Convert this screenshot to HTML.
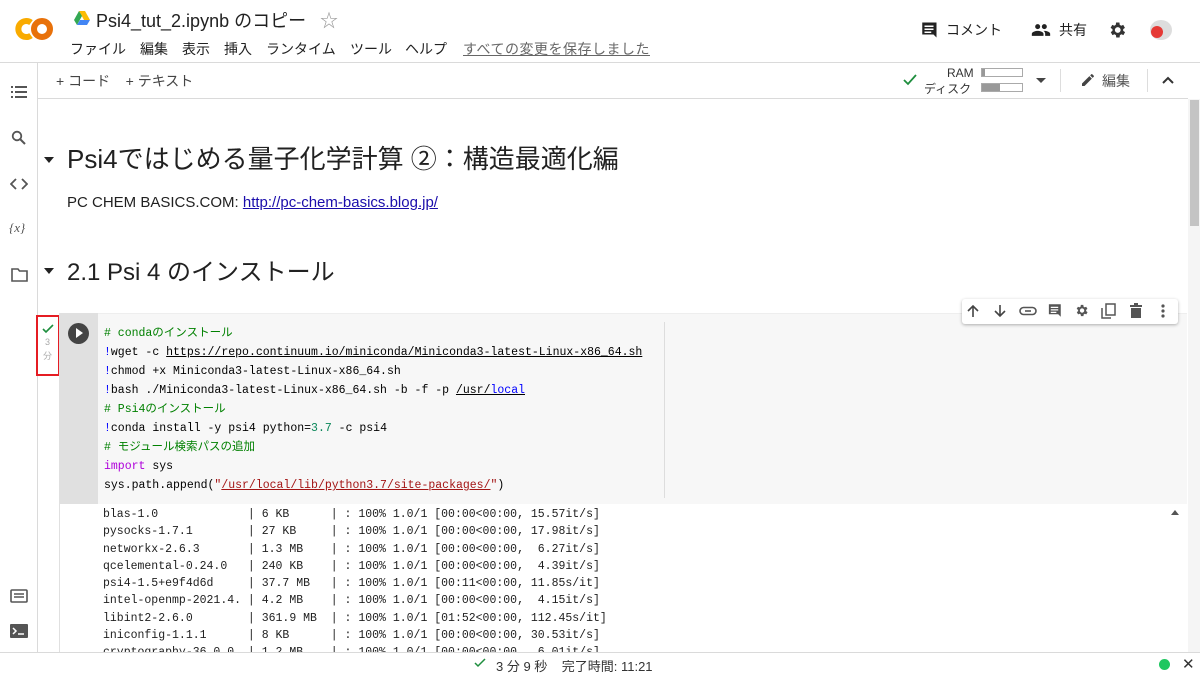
<!DOCTYPE html><html><head><meta charset="utf-8"><style>
*{margin:0;padding:0;box-sizing:border-box}
body{width:1200px;height:677px;overflow:hidden;background:#fff;font-family:"Liberation Sans","Noto Sans CJK JP",sans-serif;color:#212121;position:relative}
.a{position:absolute}
.mono{font-family:"Liberation Mono","Noto Sans CJK JP",monospace;font-size:11.5px;white-space:pre}
.m{position:absolute;top:39px;font-size:14px;color:#212121}
</style></head><body>
<!-- header -->
<svg class="a" style="left:13px;top:17px" width="42" height="24" viewBox="0 0 42 24"><path d="M18 5.5A8 8 0 1 0 18 18.5" fill="none" stroke="#f9ab00" stroke-width="6"/><circle cx="29" cy="12" r="8" fill="none" stroke="#e8710a" stroke-width="6"/></svg>
<svg class="a" style="left:74px;top:11px" width="16" height="14" viewBox="0 0 16 14"><path d="M5 0h6l5 9h-6z" fill="#fbbc04"/><path d="M5 0L0 9l3 5 5-9z" fill="#34a853"/><path d="M3 14h10l3-5H6z" fill="#4285f4"/></svg>
<div class="a" style="left:96px;top:7px;font-size:18px;color:#212121">Psi4_tut_2.ipynb のコピー</div>
<div class="a" style="left:320px;top:7px;font-size:18px;color:#999">☆</div>
<div class="m" style="left:70px">ファイル</div>
<div class="m" style="left:140px">編集</div>
<div class="m" style="left:182px">表示</div>
<div class="m" style="left:224px">挿入</div>
<div class="m" style="left:266px">ランタイム</div>
<div class="m" style="left:350px">ツール</div>
<div class="m" style="left:405px">ヘルプ</div>
<div class="m" style="left:463px;color:#666;text-decoration:underline;letter-spacing:0.5px">すべての変更を保存しました</div>
<svg class="a" style="left:920px;top:21px" width="18" height="18" viewBox="0 0 24 24"><path d="M21 2H3v16h15l4 4V2zM6 6h12v2H6zm0 4h12v2H6zm0 4h9v2H6z" fill="#222"/></svg>
<div class="a" style="left:946px;top:20px;font-size:14px">コメント</div>
<svg class="a" style="left:1030px;top:20px" width="22" height="20" viewBox="0 0 24 24"><path d="M16 11a3 3 0 100-6 3 3 0 000 6zm-8 0a3 3 0 100-6 3 3 0 000 6zm0 2c-2.3 0-7 1.2-7 3.5V19h14v-2.5C15 14.2 10.3 13 8 13zm8 0c-.3 0-.6 0-1 .1 1.2.8 2 2 2 3.4V19h6v-2.5c0-2.3-4.7-3.5-7-3.5z" fill="#222"/></svg>
<div class="a" style="left:1059px;top:20px;font-size:14px">共有</div>
<svg class="a" style="left:1107px;top:20px" width="20" height="20" viewBox="0 0 24 24"><path d="M19.4 13a7 7 0 000-2l2.1-1.6-2-3.5-2.5 1a7 7 0 00-1.7-1L14.9 3h-4l-.4 2.9a7 7 0 00-1.7 1l-2.5-1-2 3.5L6.6 11a7 7 0 000 2l-2.1 1.6 2 3.5 2.5-1a7 7 0 001.7 1l.4 2.9h4l.4-2.9a7 7 0 001.7-1l2.5 1 2-3.5zM12.9 15.5a3.5 3.5 0 110-7 3.5 3.5 0 010 7z" fill="#333"/></svg>
<div class="a" style="left:1150px;top:20px;width:22px;height:20px;border-radius:50%;background:#ddd"></div>
<div class="a" style="left:1151px;top:26px;width:12px;height:12px;border-radius:50%;background:#e53935"></div>
<div class="a" style="left:0;top:62px;width:1200px;height:1px;background:#dadada"></div>
<!-- sidebar -->
<div class="a" style="left:37px;top:63px;width:1px;height:589px;background:#dadada"></div>
<svg class="a" style="left:10px;top:84px" width="18" height="16" viewBox="0 0 18 16"><path d="M1 2h2v2H1zm4 0h12v2H5zM1 7h2v2H1zm4 0h12v2H5zM1 12h2v2H1zm4 0h12v2H5z" fill="#555"/></svg>
<svg class="a" style="left:11px;top:130px" width="16" height="16" viewBox="0 0 16 16"><circle cx="6" cy="6" r="4.3" fill="none" stroke="#555" stroke-width="1.8"/><path d="M9 9l5 5" stroke="#555" stroke-width="2"/></svg>
<svg class="a" style="left:10px;top:177px" width="18" height="14" viewBox="0 0 18 14"><path d="M6 2L1 7l5 5M12 2l5 5-5 5" fill="none" stroke="#555" stroke-width="1.8"/></svg>
<div class="a" style="left:9px;top:220px;font:italic 13px 'Liberation Serif';color:#555">{<i>x</i>}</div>
<svg class="a" style="left:11px;top:268px" width="17" height="14" viewBox="0 0 17 14"><path d="M1 1h6l1.5 2H16v10H1z" fill="none" stroke="#555" stroke-width="1.6"/></svg>
<svg class="a" style="left:10px;top:589px" width="18" height="14" viewBox="0 0 18 14"><rect x="1" y="1" width="16" height="12" rx="1" fill="none" stroke="#555" stroke-width="1.6"/><path d="M4 5h10M4 8h10" stroke="#555" stroke-width="1.4"/></svg>
<svg class="a" style="left:10px;top:624px" width="18" height="14" viewBox="0 0 18 14"><rect width="18" height="14" rx="1" fill="#555"/><path d="M3 4l3 3-3 3" fill="none" stroke="#fff" stroke-width="1.5"/><path d="M8 10h6" stroke="#fff" stroke-width="1.5"/></svg>
<!-- toolbar -->
<div class="a" style="left:56px;top:71px;font-size:14px;color:#444">+ コード&nbsp;&nbsp;&nbsp;&nbsp;+ テキスト</div>
<svg class="a" style="left:903px;top:74px" width="14" height="12" viewBox="0 0 14 12"><path d="M1 6l4 4 8-9" fill="none" stroke="#1e8e3e" stroke-width="1.8"/></svg>
<div class="a" style="left:947px;top:66px;font-size:12px;color:#333">RAM</div>
<div class="a" style="left:924px;top:80px;font-size:12px;color:#333">ディスク</div>
<div class="a" style="left:981px;top:68px;width:42px;height:9px;border:1px solid #aaa"><div style="width:3px;height:7px;background:#999"></div></div>
<div class="a" style="left:981px;top:83px;width:42px;height:9px;border:1px solid #aaa"><div style="width:18px;height:7px;background:#999"></div></div>
<div class="a" style="left:1036px;top:78px;border:5px solid transparent;border-top-color:#444"></div>
<div class="a" style="left:1060px;top:69px;width:1px;height:23px;background:#ddd"></div>
<svg class="a" style="left:1080px;top:72px" width="16" height="16" viewBox="0 0 24 24"><path d="M3 17.2V21h3.8L17.8 9.9l-3.7-3.7zM20.7 7a1 1 0 000-1.4l-2.3-2.3a1 1 0 00-1.4 0l-1.8 1.8 3.7 3.7z" fill="#444"/></svg>
<div class="a" style="left:1102px;top:71px;font-size:14px;color:#555">編集</div>
<div class="a" style="left:1147px;top:69px;width:1px;height:23px;background:#ddd"></div>
<svg class="a" style="left:1162px;top:76px" width="12" height="8" viewBox="0 0 12 8"><path d="M1 7l5-5 5 5" fill="none" stroke="#333" stroke-width="2"/></svg>
<div class="a" style="left:38px;top:98px;width:1150px;height:1px;background:#dadada"></div>
<!-- scrollbar -->
<div class="a" style="left:1188px;top:99px;width:12px;height:553px;background:#f5f5f5"></div>
<div class="a" style="left:1190px;top:100px;width:9px;height:126px;background:#c4c4c4"></div>
<!-- headings -->
<div class="a" style="left:44px;top:157px;border:5px solid transparent;border-top:6px solid #222"></div>
<div class="a" style="left:67px;top:139px;font-size:26px;color:#212121">Psi4ではじめる量子化学計算 ②：構造最適化編</div>
<div class="a" style="left:67px;top:194px;font-size:15px">PC CHEM BASICS.COM: <span style="color:#1a0dab;text-decoration:underline">http://pc-chem-basics.blog.jp/</span></div>
<div class="a" style="left:44px;top:268px;border:5px solid transparent;border-top:6px solid #222"></div>
<div class="a" style="left:67px;top:252px;font-size:24px">2.1 Psi 4 のインストール</div>
<!-- cell -->
<div class="a" style="left:36px;top:315px;width:24px;height:61px;border:2px solid #e51c23"></div>
<svg class="a" style="left:42px;top:324px" width="12" height="10" viewBox="0 0 12 10"><path d="M1 5l3 3 7-7" fill="none" stroke="#1e8e3e" stroke-width="1.6"/></svg>
<div class="a" style="left:45px;top:337px;font-size:9px;color:#aaa">3</div>
<div class="a" style="left:43px;top:349px;font-size:9px;color:#aaa">分</div>
<div class="a" style="left:59px;top:313px;width:1128px;height:191px;background:#f7f7f7;border-top:1px solid #eee"></div>
<div class="a" style="left:59px;top:313px;width:39px;height:191px;background:#e0e0e0"></div>
<div class="a" style="left:68px;top:323px;width:21px;height:21px;border-radius:50%;background:#444"></div>
<div class="a" style="left:76px;top:328px;border:5px solid transparent;border-left:7px solid #fff;border-right:0"></div>
<div class="a" style="left:664px;top:322px;width:1px;height:176px;background:#ddd"></div>
<div class="a mono" style="left:104px;top:324px;line-height:19px;color:#000"><span style="color:#008000"># condaのインストール</span>
<span style="color:#00f">!</span>wget -c <u>https://repo.continuum.io/miniconda/Miniconda3-latest-Linux-x86_64.sh</u>
<span style="color:#00f">!</span>chmod +x Miniconda3-latest-Linux-x86_64.sh
<span style="color:#00f">!</span>bash ./Miniconda3-latest-Linux-x86_64.sh -b -f -p <u>/usr/<span style="color:#00f">local</span></u>
<span style="color:#008000"># Psi4のインストール</span>
<span style="color:#00f">!</span>conda install -y psi4 python=<span style="color:#098658">3.7</span> -c psi4
<span style="color:#008000"># モジュール検索パスの追加</span>
<span style="color:#af00db">import</span> sys
sys.path.append(<span style="color:#a31515">"<u>/usr/local/lib/python3.7/site-packages/</u>"</span>)</div>
<!-- cell toolbar (on top) -->
<div class="a" style="left:962px;top:299px;width:216px;height:25px;background:#fff;border-radius:3px;box-shadow:0 1px 3px rgba(0,0,0,.3)"></div>
<svg class="a" style="left:966px;top:304px" width="14" height="14" viewBox="0 0 14 14"><path d="M7 13V2M2 7l5-5 5 5" fill="none" stroke="#444" stroke-width="1.6"/></svg>
<svg class="a" style="left:993px;top:304px" width="14" height="14" viewBox="0 0 14 14"><path d="M7 1v11M2 7l5 5 5-5" fill="none" stroke="#444" stroke-width="1.6"/></svg>
<svg class="a" style="left:1019px;top:306px" width="18" height="10" viewBox="0 0 18 10"><rect x="1" y="1.5" width="16" height="7" rx="3.5" fill="none" stroke="#555" stroke-width="1.6"/><path d="M6 5h6" stroke="#555" stroke-width="1.6"/></svg>
<svg class="a" style="left:1047px;top:303px" width="15" height="15" viewBox="0 0 24 24"><path d="M21 2H3v16h15l4 4V2zM6 6h12v2H6zm0 4h12v2H6zm0 4h9v2H6z" fill="#555"/></svg>
<svg class="a" style="left:1074px;top:303px" width="15" height="15" viewBox="0 0 24 24"><path d="M19.4 13a7 7 0 000-2l2.1-1.6-2-3.5-2.5 1a7 7 0 00-1.7-1L14.9 3h-4l-.4 2.9a7 7 0 00-1.7 1l-2.5-1-2 3.5L6.6 11a7 7 0 000 2l-2.1 1.6 2 3.5 2.5-1a7 7 0 001.7 1l.4 2.9h4l.4-2.9a7 7 0 001.7-1l2.5 1 2-3.5zM12.9 15.5a3.5 3.5 0 110-7 3.5 3.5 0 010 7z" fill="#555"/></svg>
<svg class="a" style="left:1101px;top:303px" width="15" height="16" viewBox="0 0 15 16"><rect x="5" y="1" width="9" height="11" fill="none" stroke="#555" stroke-width="1.5"/><path d="M1 5v10h9" fill="none" stroke="#555" stroke-width="1.5"/></svg>
<svg class="a" style="left:1130px;top:303px" width="12" height="15" viewBox="0 0 12 15"><path d="M0 2h12v2H0zM4 0h4v2H4zM1 5h10v10H1z" fill="#555"/></svg>
<svg class="a" style="left:1161px;top:304px" width="4" height="14" viewBox="0 0 4 14"><circle cx="2" cy="2" r="1.6" fill="#555"/><circle cx="2" cy="7" r="1.6" fill="#555"/><circle cx="2" cy="12" r="1.6" fill="#555"/></svg>
<!-- output -->
<div class="a" style="left:59px;top:504px;width:1px;height:148px;background:#e0e0e0"></div>
<div class="a mono" style="left:103px;top:506px;line-height:17.3px;color:#212121">blas-1.0             | 6 KB      | : 100% 1.0/1 [00:00&lt;00:00, 15.57it/s]
pysocks-1.7.1        | 27 KB     | : 100% 1.0/1 [00:00&lt;00:00, 17.98it/s]
networkx-2.6.3       | 1.3 MB    | : 100% 1.0/1 [00:00&lt;00:00,  6.27it/s]
qcelemental-0.24.0   | 240 KB    | : 100% 1.0/1 [00:00&lt;00:00,  4.39it/s]
psi4-1.5+e9f4d6d     | 37.7 MB   | : 100% 1.0/1 [00:11&lt;00:00, 11.85s/it]
intel-openmp-2021.4. | 4.2 MB    | : 100% 1.0/1 [00:00&lt;00:00,  4.15it/s]
libint2-2.6.0        | 361.9 MB  | : 100% 1.0/1 [01:52&lt;00:00, 112.45s/it]
iniconfig-1.1.1      | 8 KB      | : 100% 1.0/1 [00:00&lt;00:00, 30.53it/s]
cryptography-36.0.0  | 1.2 MB    | : 100% 1.0/1 [00:00&lt;00:00,  6.01it/s]</div>
<div class="a" style="left:1168px;top:504px;width:14px;height:148px;background:#fff"></div>
<div class="a" style="left:1171px;top:510px;border:4px solid transparent;border-bottom:5px solid #555;border-top:0"></div>
<!-- status -->
<div class="a" style="left:0;top:652px;width:1200px;height:25px;background:#fff;border-top:1px solid #dadada"></div>
<svg class="a" style="left:474px;top:658px" width="12" height="10" viewBox="0 0 12 10"><path d="M1 5l3 3 7-7" fill="none" stroke="#1e8e3e" stroke-width="1.5"/></svg>
<div class="a" style="left:496px;top:656px;font-size:13px;color:#333">3 分 9 秒&nbsp;&nbsp;&nbsp;&nbsp;完了時間: 11:21</div>
<div class="a" style="left:1159px;top:659px;width:11px;height:11px;border-radius:50%;background:#1ec760"></div>
<div class="a" style="left:1182px;top:655px;font-size:15px;color:#333">✕</div>
</body></html>
